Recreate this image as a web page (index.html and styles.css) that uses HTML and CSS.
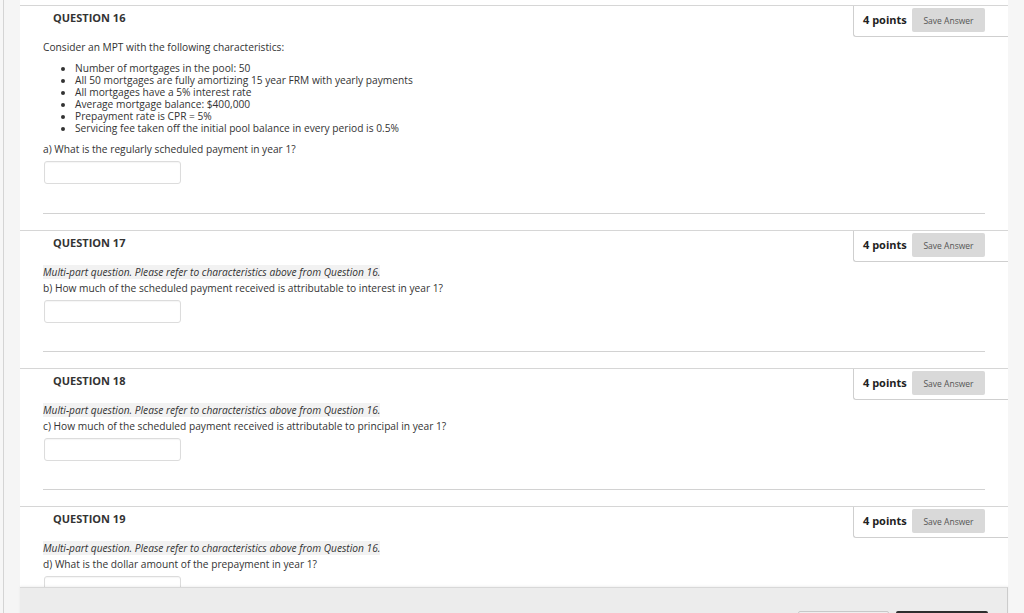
FILE: index.html
```html
<!DOCTYPE html>
<html>
<head>
<meta charset="utf-8">
<link rel="stylesheet" href="styles.css">
</head>
<body>
<div class="page">
  <div class="leftbar"></div>
  <div class="main">
    <div class="question">
      <div class="qhead">
        <h3 class="qtitle">QUESTION 16</h3>
        <div class="points">
          <span class="pts">4 points</span>
          <span class="save">Save Answer</span>
        </div>
      </div>
      <div class="qbody">
        <p class="line first">Consider an MPT with the following characteristics:</p>
        <ul class="chars">
          <li>Number of mortgages in the pool: 50</li>
          <li>All 50 mortgages are fully amortizing 15 year FRM with yearly payments</li>
          <li>All mortgages have a 5% interest rate</li>
          <li>Average mortgage balance: $400,000</li>
          <li>Prepayment rate is CPR = 5%</li>
          <li>Servicing fee taken off the initial pool balance in every period is 0.5%</li>
        </ul>
        <p class="line">a) What is the regularly scheduled payment in year 1?</p>
        <div class="answer"></div>
        <div class="sep"></div>
      </div>
    </div>

    <div class="question">
      <div class="qhead">
        <h3 class="qtitle">QUESTION 17</h3>
        <div class="points">
          <span class="pts">4 points</span>
          <span class="save">Save Answer</span>
        </div>
      </div>
      <div class="qbody">
        <p class="line first multi"><em class="note">Multi-part question. Please refer to characteristics above from Question 16.</em></p>
        <p class="line">b) How much of the scheduled payment received is attributable to interest in year 1?</p>
        <div class="answer"></div>
        <div class="sep short"></div>
      </div>
    </div>

    <div class="question">
      <div class="qhead">
        <h3 class="qtitle">QUESTION 18</h3>
        <div class="points">
          <span class="pts">4 points</span>
          <span class="save">Save Answer</span>
        </div>
      </div>
      <div class="qbody">
        <p class="line first multi"><em class="note">Multi-part question. Please refer to characteristics above from Question 16.</em></p>
        <p class="line">c) How much of the scheduled payment received is attributable to principal in year 1?</p>
        <div class="answer"></div>
        <div class="sep short"></div>
      </div>
    </div>

    <div class="question">
      <div class="qhead">
        <h3 class="qtitle">QUESTION 19</h3>
        <div class="points">
          <span class="pts">4 points</span>
          <span class="save">Save Answer</span>
        </div>
      </div>
      <div class="qbody">
        <p class="line first multi"><em class="note">Multi-part question. Please refer to characteristics above from Question 16.</em></p>
        <p class="line">d) What is the dollar amount of the prepayment in year 1?</p>
        <div class="answer"></div>
        <div class="sep short"></div>
      </div>
    </div>
  </div>
</div>
<div class="bottombar">
  <span class="btn light"></span>
  <span class="btn dark"></span>
</div>
</body>
</html>
```
FILE: styles.css
```css
html, body {
  margin: 0;
  padding: 0;
}
body {
  background: #f6f6f6;
  font-family: "Open Sans", "Liberation Sans", sans-serif;
  color: #333;
  font-size: 10.2px;
  overflow: hidden;
  height: 613px;
}
.page {
  display: flex;
  align-items: stretch;
  min-height: 613px;
}
.leftbar {
  width: 16px;
  margin-left: 3px;
  border-left: 1px solid #d4d4d4;
  background: #f5f5f5;
  flex: none;
}
.main {
  width: 988px;
  flex: none;
  background: #fff;
  padding-top: 5px;
}
.question {
  border-top: 1px solid #d6d6d6;
}
.qhead {
  display: flex;
  justify-content: space-between;
  align-items: flex-start;
  height: 31px;
}
.qtitle {
  margin: 0;
  padding: 5px 0 0 33px;
  font-size: 11px;
  line-height: 14px;
  font-weight: 700;
  color: #333;
}
.points {
  box-sizing: border-box;
  width: 155px;
  height: 31px;
  border-left: 1px solid #cfcfcf;
  border-bottom: 1px solid #cfcfcf;
  border-bottom-left-radius: 3px;
  display: flex;
  align-items: flex-start;
  padding: 2px 0 0 9px;
}
.pts {
  font-weight: 700;
  font-size: 11px;
  line-height: 23px;
  color: #222;
  width: 49px;
}
.save {
  width: 73px;
  height: 24px;
  background: #d9d9d9;
  border-radius: 2px;
  color: #555;
  font-size: 8.5px;
  display: flex;
  align-items: center;
  justify-content: center;
}
.qbody {
  padding: 0 23px;
}
.line {
  margin: 0;
  line-height: 16px;
}
.line.first {
  margin-top: 2px;
}
.line.multi {
  margin-top: 1.5px;
}
.note {
  background: #f2f2f2;
  font-style: italic;
}
.chars {
  margin: 7px 0;
  padding-left: 32px;
  line-height: 12px;
}
.answer {
  box-sizing: border-box;
  width: 137px;
  height: 23px;
  margin: 4px 0 0 1px;
  border: 1px solid #dcdcdc;
  border-radius: 3px;
  background: #fff;
  box-shadow: inset 0 1px 1px rgba(0,0,0,0.04);
}
.sep {
  margin-top: 29px;
  height: 1px;
  background: #d2d2d2;
  margin-bottom: 16px;
}
.sep.short {
  margin-top: 28.5px;
}
.bottombar {
  position: fixed;
  left: 20px;
  top: 587px;
  width: 988px;
  height: 40px;
  box-sizing: border-box;
  background: #ececec;
  border-top: 1px solid #d8d8d8;
  border-right: 1px solid #cccccc;
  box-shadow: 0 -1px 2px rgba(0,0,0,0.06);
  display: flex;
  justify-content: flex-end;
  align-items: flex-start;
  padding: 23px 19px 0 0;
  gap: 7px;
}
.btn {
  height: 30px;
  border-radius: 2px;
  box-sizing: border-box;
}
.btn.light {
  width: 91px;
  background: #efefef;
  border: 1px solid #c8c8c8;
}
.btn.dark {
  width: 92px;
  background: #2e2e2e;
}
```
